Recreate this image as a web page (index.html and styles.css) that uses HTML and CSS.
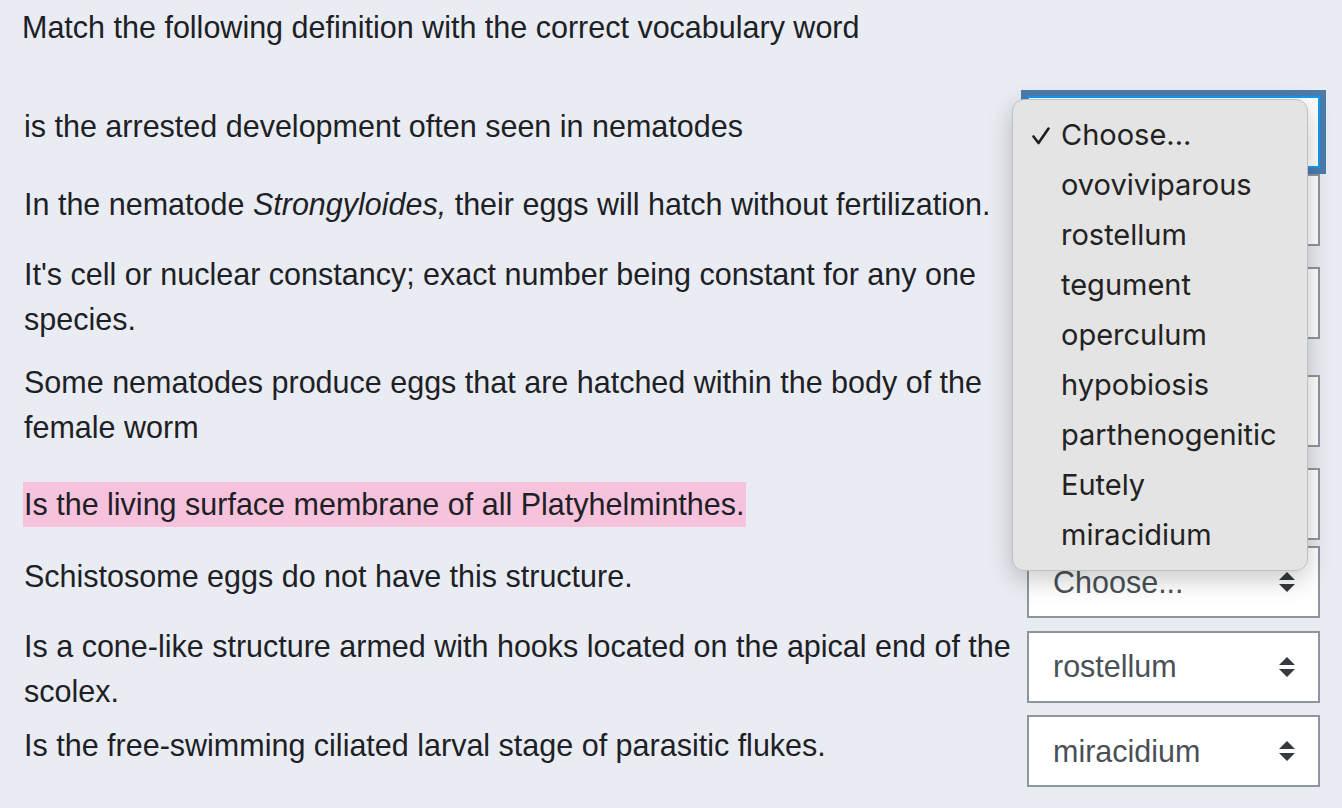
FILE: index.html
```html
<!DOCTYPE html>
<html lang="en">
<head>
    <meta charset="UTF-8">
    <meta name="viewport" content="width=device-width, initial-scale=1.0">
    <title>Match question</title>
    <link rel="stylesheet" href="styles.css">
</head>
<body>
<div class="que">
    <p class="qtext">Match the following definition with the correct vocabulary word</p>

    <div class="answer">
        <div class="row">
            <div class="text"><p>is the arrested development often seen in nematodes</p></div>
            <div class="control focused">
                <select name="sub0">
                    <option>Choose...</option>
                </select>
                <svg class="arrows" width="16" height="20" viewBox="0 0 16 20"><path d="M8 0 L16 8 H0 Z M0 12 H16 L8 20 Z"/></svg>

                <ul class="menu">
                    <li class="selected"><svg class="check" width="18" height="18" viewBox="0 0 18 18"><path d="M1.5 9.5 L6.5 16 L16.5 1.5" fill="none" stroke="#1f1f1f" stroke-width="2.6" stroke-linecap="round" stroke-linejoin="round"/></svg>Choose...</li>
                    <li>ovoviviparous</li>
                    <li>rostellum</li>
                    <li>tegument</li>
                    <li>operculum</li>
                    <li>hypobiosis</li>
                    <li>parthenogenitic</li>
                    <li>Eutely</li>
                    <li>miracidium</li>
                </ul>
            </div>
        </div>

        <div class="row">
            <div class="text"><p>In the nematode <em>Strongyloides,</em> their eggs will hatch without fertilization.</p></div>
            <div class="control">
                <select name="sub1"><option>Choose...</option></select>
                <svg class="arrows" width="16" height="20" viewBox="0 0 16 20"><path d="M8 0 L16 8 H0 Z M0 12 H16 L8 20 Z"/></svg>
            </div>
        </div>

        <div class="row">
            <div class="text"><p>It's cell or nuclear constancy; exact number being constant for any one species.</p></div>
            <div class="control">
                <select name="sub2"><option>Choose...</option></select>
                <svg class="arrows" width="16" height="20" viewBox="0 0 16 20"><path d="M8 0 L16 8 H0 Z M0 12 H16 L8 20 Z"/></svg>
            </div>
        </div>

        <div class="row">
            <div class="text"><p>Some nematodes produce eggs that are hatched within the body of the female worm</p></div>
            <div class="control">
                <select name="sub3"><option>Choose...</option></select>
                <svg class="arrows" width="16" height="20" viewBox="0 0 16 20"><path d="M8 0 L16 8 H0 Z M0 12 H16 L8 20 Z"/></svg>
            </div>
        </div>

        <div class="row">
            <div class="text"><span class="hl">Is the living surface membrane of all Platyhelminthes.</span></div>
            <div class="control">
                <select name="sub4"><option>Choose...</option></select>
                <svg class="arrows" width="16" height="20" viewBox="0 0 16 20"><path d="M8 0 L16 8 H0 Z M0 12 H16 L8 20 Z"/></svg>
            </div>
        </div>

        <div class="row">
            <div class="text"><p>Schistosome eggs do not have this structure.</p></div>
            <div class="control">
                <select name="sub5"><option>Choose...</option></select>
                <svg class="arrows" width="16" height="20" viewBox="0 0 16 20"><path d="M8 0 L16 8 H0 Z M0 12 H16 L8 20 Z"/></svg>
            </div>
        </div>

        <div class="row">
            <div class="text plain">Is a cone-like structure armed with hooks located on the apical end of the scolex.</div>
            <div class="control">
                <select name="sub6"><option>rostellum</option></select>
                <svg class="arrows" width="16" height="20" viewBox="0 0 16 20"><path d="M8 0 L16 8 H0 Z M0 12 H16 L8 20 Z"/></svg>
            </div>
        </div>

        <div class="row">
            <div class="text"><p>Is the free-swimming ciliated larval stage of parasitic flukes.</p></div>
            <div class="control">
                <select name="sub7"><option>miracidium</option></select>
                <svg class="arrows" width="16" height="20" viewBox="0 0 16 20"><path d="M8 0 L16 8 H0 Z M0 12 H16 L8 20 Z"/></svg>
            </div>
        </div>
    </div>
</div>
</body>
</html>
```

FILE: styles.css
```css
body {
    margin: 0;
    background-color: #e9ecf2;
    font-family: "Liberation Sans", Arial, sans-serif;
    font-size: 30.5px;
    line-height: 45px;
    color: #1d2125;
}

.que {
    padding: 5px 22px 0 22px;
}

.qtext {
    margin: 0 0 46px;
}

.answer {
    display: flex;
    flex-direction: column;
    gap: 6px;
}

.row {
    display: flex;
    align-items: center;
}

.text {
    flex: 1;
    padding-left: 2px;
}

.text p {
    margin: 0 0 12px;
}

.text.plain {
    margin-bottom: -5px;
}

.hl {
    display: inline-block;
    margin-left: -1px;
    padding: 0 2px 0 1px;
    background-color: #f6c2dc;
}

.control {
    position: relative;
    width: 293px;
    margin-left: 15px;
    flex-shrink: 0;
}

select {
    display: block;
    width: 100%;
    height: 72px;
    padding: 0 50px 0 24px;
    border: 2px solid #8f959e;
    border-radius: 0;
    background-color: #fff;
    color: #495057;
    font: inherit;
    appearance: none;
    -webkit-appearance: none;
}

.focused select {
    border-color: #1598f3;
    box-shadow: 0 0 0 6px #4a7cac;
}

.arrows {
    position: absolute;
    right: 25px;
    top: 26px;
    fill: #343a40;
    pointer-events: none;
}

/* open popup of the first select */
.menu {
    position: absolute;
    left: -15px;
    top: 3px;
    z-index: 2;
    width: 296px;
    box-sizing: border-box;
    margin: 0;
    padding: 10px 0;
    list-style: none;
    background-color: #e3e4e3;
    border: 1px solid #bfc0c0;
    border-radius: 12px;
    box-shadow: 0 8px 26px rgba(0, 0, 0, 0.22);
    font-family: Inter, "Liberation Sans", sans-serif;
    font-size: 29px;
    line-height: 50px;
    color: #222;
}

.menu li {
    position: relative;
    padding-left: 48px;
}

.check {
    position: absolute;
    left: 19px;
    top: 17px;
}
```
